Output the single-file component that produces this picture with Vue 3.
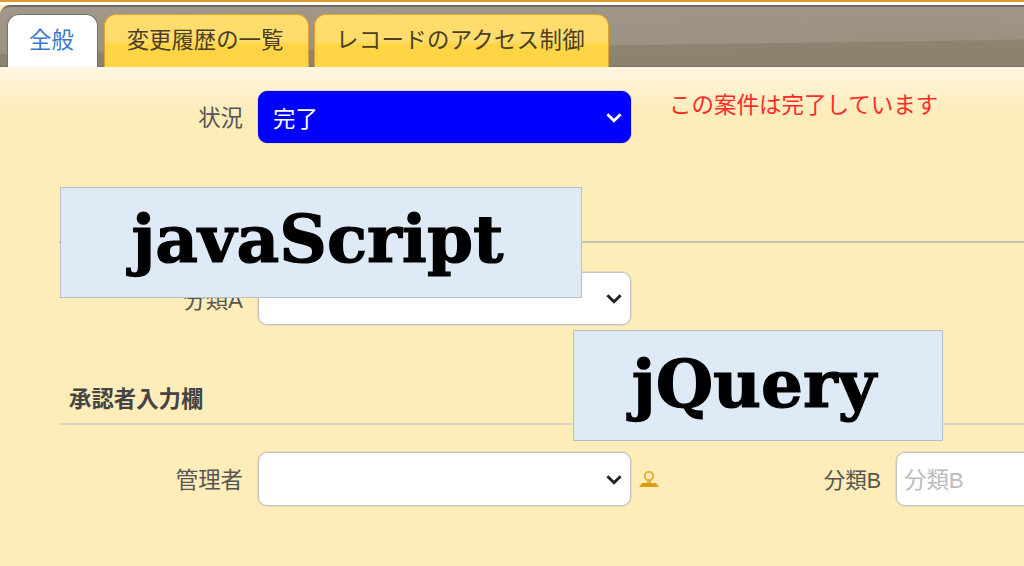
<template>
  <div class="page">
    <div class="top-strip"></div>
    <div class="tabbar">
      <div
        v-for="(tab, i) in tabs"
        :key="tab"
        class="tab"
        :class="{ active: i === 0 }"
      >
        {{ tab }}
      </div>
    </div>

    <div class="content">
      <div class="row status-row">
        <label class="label">状況</label>
        <div class="select blue">
          <span>完了</span>
          <svg class="chevron" viewBox="0 0 16 10"><path d="M2 2l6 6 6-6" /></svg>
        </div>
        <span class="notice">この案件は完了しています</span>
      </div>

      <div class="section first"></div>
      <div class="row">
        <label class="label">分類A</label>
        <div class="select">
          <svg class="chevron" viewBox="0 0 16 10"><path d="M2 2l6 6 6-6" /></svg>
        </div>
      </div>

      <div class="section second">
        <div class="section-title">承認者入力欄</div>
      </div>
      <div class="row last-row">
        <label class="label">管理者</label>
        <div class="select tall">
          <svg class="chevron" viewBox="0 0 16 10"><path d="M2 2l6 6 6-6" /></svg>
        </div>
        <svg class="user-icon" viewBox="0 0 20 18">
          <circle cx="10" cy="6" r="4.2" fill="none" stroke="#e6b040" stroke-width="2" />
          <path d="M8 10h4v3H8z" fill="#e6b040" />
          <path d="M0 17l3-4h14l3 4z" fill="#dd9c10" />
        </svg>
        <label class="label-b">分類B</label>
        <input class="text-input" placeholder="分類B" />
      </div>
    </div>

    <div class="tech-box js">javaScript</div>
    <div class="tech-box jq">jQuery</div>
  </div>
</template>

<script setup>
const tabs = ['全般', '変更履歴の一覧', 'レコードのアクセス制御']
</script>

<style>
html,
body {
  margin: 0;
  overflow: hidden;
}
</style>

<style scoped>
.page {
  position: relative;
  width: 1024px;
  height: 566px;
  overflow: hidden;
  background: #feecb9;
  font-family: "Liberation Sans", "Noto Sans CJK JP", sans-serif;
  color: #444;
}

.top-strip {
  height: 5px;
  box-sizing: border-box;
  border-top: 2px solid #dd9c2a;
  background: #fff;
}

.tabbar {
  display: flex;
  align-items: flex-end;
  gap: 5px;
  height: 62px;
  box-sizing: border-box;
  padding-left: 7px;
  border-top: 2px solid #6f6a5e;
  border-bottom: 1px solid #77736a;
  border-radius: 10px 0 0 0;
  background: linear-gradient(179.2deg, #a1978a 0, #9b9282 63%, #8c8371 65%, #8a816f 100%);
}

.tab {
  height: 53px;
  box-sizing: border-box;
  display: flex;
  align-items: center;
  justify-content: center;
  margin-bottom: -1px;
  padding: 0 0 7px;
  border: 1px solid #e0a32c;
  border-bottom: 0;
  border-radius: 12px 12px 0 0;
  background: linear-gradient(#ffdc6c 0, #ffdc6c 50%, #ffd546 58%, #ffd546 100%);
  font-size: 22.4px;
  color: #4a3f22;
}

.tab.active {
  width: 91px;
  margin-right: 1px;
  padding-right: 2px;
  border-color: #77736a;
  background: #fff;
  color: #3c78c8;
}

.tab:nth-child(2) {
  width: 205px;
  padding-right: 3px;
}

.tab:nth-child(3) {
  width: 295px;
  padding-right: 2px;
  letter-spacing: 0.35px;
}

.content {
  box-sizing: border-box;
  height: 499px;
  padding: 24px 0 0 59px;
  background: linear-gradient(#fff6e2 0, #feecb9 46px);
}

.row {
  display: flex;
  align-items: center;
  height: 53px;
}

.status-row {
  height: 52px;
}

.label {
  flex: none;
  width: 199px;
  box-sizing: border-box;
  padding: 0 15px 2px 0;
  text-align: right;
  font-size: 22.4px;
  color: #555;
}

.select {
  flex: none;
  width: 373px;
  height: 53px;
  box-sizing: border-box;
  display: flex;
  align-items: center;
  justify-content: flex-end;
  padding: 0 14px;
  border: 1px solid #c4c4bc;
  border-radius: 9px;
  background: #fff;
  box-shadow: 0 0 0 1px rgba(196, 196, 188, 0.4);
  font-size: 22.4px;
}

.select.blue {
  height: 52px;
  justify-content: space-between;
  border-color: #0000e8;
  background: #0000ff;
  color: #fff;
}

.select.tall {
  height: 54px;
}

.chevron {
  width: 18px;
  height: 11px;
  margin-right: -7px;
  fill: none;
  stroke: #222;
  stroke-width: 2.6;
}

.blue .chevron {
  stroke: #fff;
}

.notice {
  align-self: flex-start;
  margin: -4px 0 0 38px;
  font-size: 22.5px;
  color: #ff2a2a;
}

.section {
  box-sizing: border-box;
}

.section.first {
  height: 100px;
  margin-bottom: 29px;
  border-bottom: 2px solid #c4c3b4;
}

.section.second {
  height: 100px;
  margin-bottom: 27px;
  display: flex;
  align-items: flex-end;
  padding-bottom: 11px;
  border-bottom: 2px solid #d9d5bf;
}

.section-title {
  padding-left: 10px;
  font-size: 22.4px;
  line-height: 24px;
  font-weight: bold;
  color: #444;
}

.last-row {
  height: 54px;
}

.user-icon {
  flex: none;
  width: 20px;
  height: 18px;
  margin: 0 0 0 8px;
}

.label-b {
  flex: none;
  width: 237px;
  box-sizing: border-box;
  padding: 0 15px 2px 0;
  text-align: right;
  font-size: 21.5px;
  color: #555;
}

.text-input {
  flex: none;
  width: 200px;
  height: 54px;
  box-sizing: border-box;
  padding: 4px 7px 0;
  border: 1px solid #c4c4bc;
  border-radius: 9px 0 0 9px;
  background: #fff;
  box-shadow: 0 0 0 1px rgba(196, 196, 188, 0.4);
  font: 22.4px "Liberation Sans", "Noto Sans CJK JP", sans-serif;
}

.text-input::placeholder {
  color: #bbb;
}

.tech-box {
  position: absolute;
  box-sizing: border-box;
  display: flex;
  align-items: center;
  justify-content: center;
  height: 111px;
  padding: 0 7px 8px 0;
  border: 1px solid #b9bfc8;
  background: #deeaf6;
  color: #000;
  font-family: "DejaVu Serif", serif;
  font-weight: bold;
  font-size: 66px;
  -webkit-text-stroke: 1.2px #000;
}

.js {
  left: 60px;
  top: 187px;
  width: 522px;
}

.jq {
  left: 573px;
  top: 330px;
  width: 370px;
  padding: 0 8px 4px 0;
}
</style>
